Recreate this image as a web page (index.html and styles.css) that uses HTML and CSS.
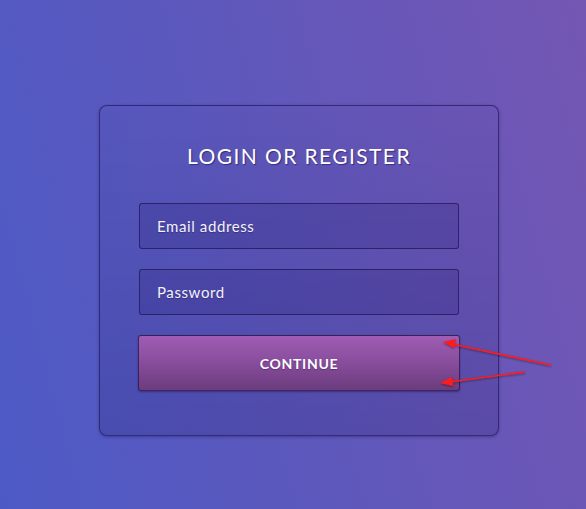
FILE: index.html
```html
<!DOCTYPE html>
<html>
<head>
<meta charset="utf-8">
<link rel="stylesheet" href="styles.css">
</head>
<body>
<div class="page">
  <form class="card">
    <h1 class="title">LOGIN OR REGISTER</h1>
    <div class="field">Email address</div>
    <div class="field">Password</div>
    <button type="button" class="btn">CONTINUE</button>
  </form>
  <svg class="arrows" width="586" height="509" viewBox="0 0 586 509">
    <defs>
      <filter id="sh" x="-20%" y="-50%" width="140%" height="200%">
        <feDropShadow dx="0" dy="1" stdDeviation="1.2" flood-color="#000" flood-opacity="0.45"/>
      </filter>
    </defs>
    <g filter="url(#sh)" stroke="#ff1a1a" fill="#ff1a1a" stroke-width="1.6">
      <line x1="551" y1="365" x2="452" y2="344"/>
      <polygon points="443,342 456,339 454,348" stroke="none"/>
      <line x1="525" y1="372" x2="449" y2="382"/>
      <polygon points="440,383 452,377 453,386" stroke="none"/>
    </g>
  </svg>
</div>
</body>
</html>
```
FILE: styles.css
```css
* { box-sizing: border-box; }
html, body { margin: 0; height: 100%; }
body {
  font-family: "Lato", "Open Sans", sans-serif;
  background: linear-gradient(75deg, #4d5ac6 0%, #5d58bc 45%, #7456b3 100%);
  overflow: hidden;
}
.page {
  position: relative;
  width: 586px;
  height: 509px;
  padding: 105px 0 0 99px;
}
.card {
  width: 400px;
  display: flex;
  flex-direction: column;
  gap: 20px;
  padding: 0 39px 44px;
  border: 1px solid rgba(40, 30, 100, 0.75);
  border-radius: 8px;
  background: linear-gradient(180deg, rgba(20, 10, 80, 0.02) 0%, rgba(20, 10, 80, 0.16) 100%);
  box-shadow: 0 1px 3px rgba(20, 10, 60, 0.35);
}
.title {
  margin: 0 0 15px;
  padding-top: 38px;
  font-size: 21px;
  line-height: 24px;
  font-weight: 400;
  color: #ffffff;
  text-align: center;
  letter-spacing: 1.4px;
  text-shadow: 1px 1px 1px rgba(30, 20, 90, 0.6);
}
.field {
  height: 46px;
  display: flex;
  align-items: center;
  padding-left: 17px;
  font-size: 15px;
  letter-spacing: 0.6px;
  color: #f4f2fb;
  background: rgba(30, 20, 100, 0.17);
  border: 1px solid rgba(30, 20, 80, 0.7);
  border-radius: 3px;
  text-shadow: 0 1px 1px rgba(20, 10, 60, 0.35);
}
.btn {
  height: 56px;
  margin: 0 -1px;
  font-family: inherit;
  font-size: 14px;
  font-weight: 700;
  letter-spacing: 0.7px;
  color: #ffffff;
  border: 1px solid rgba(40, 25, 80, 0.8);
  border-radius: 3px;
  background: linear-gradient(180deg, #9f5db3 0%, #8a4e9f 45%, #6b3c7d 100%);
  box-shadow: 0 1px 2px rgba(20, 10, 50, 0.4);
  text-shadow: 0 1px 1px rgba(40, 10, 60, 0.4);
}
.arrows {
  position: absolute;
  left: 0;
  top: 0;
  pointer-events: none;
}
```
